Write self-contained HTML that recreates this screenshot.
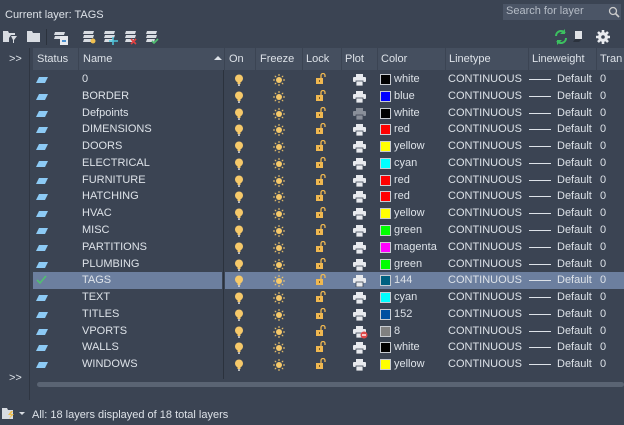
<!DOCTYPE html>
<html><head><meta charset="utf-8"><style>
*{margin:0;padding:0;box-sizing:border-box}
body{width:624px;height:425px;background:#3b4453;font-family:"Liberation Sans",sans-serif;font-size:11px;color:#dde2e8;position:relative;overflow:hidden}
.a{position:absolute;white-space:nowrap}
.hdr{position:absolute;top:48px;left:33px;width:591px;height:22px;background:#454f5f}
.sep{position:absolute;top:48px;width:1px;height:22px;background:#3b4453}
.row{position:absolute;left:33px;width:591px;height:17px}
.row span,.row svg{position:absolute}
.row span{top:2px}
.sel{background:#6c7f9f}
.sw{width:11px;height:11px;top:3px;border:1px solid #c8ccd2}
</style></head><body>
<svg width="0" height="0" style="position:absolute">
<symbol id="st" viewBox="0 0 12 6"><path d="M3 0H12L9 6H0Z" fill="#8ccaf5"/></symbol>
<symbol id="bulb" viewBox="0 0 10 12"><circle cx="5" cy="4.5" r="4" fill="#f6c96a"/><rect x="3.5" y="8" width="3" height="2" fill="#f6c96a"/><rect x="4" y="10.3" width="2" height="1.5" fill="#ddd"/></symbol>
<symbol id="sun" viewBox="0 0 12 12"><circle cx="6" cy="6" r="3" fill="#f6c96a"/><g stroke="#f6c96a" stroke-width="1"><path d="M6 0v2M6 10v2M0 6h2M10 6h2M1.8 1.8l1.4 1.4M8.8 8.8l1.4 1.4M1.8 10.2l1.4-1.4M8.8 3.2l1.4-1.4"/></g></symbol>
<symbol id="lock" viewBox="0 0 10 12"><path d="M5 5V2.5a2 2 0 0 1 4 0V4" stroke="#f0b850" stroke-width="1.3" fill="none"/><rect x="0" y="5" width="7" height="6" fill="#f0b850"/><rect x="3" y="7" width="1" height="2" fill="#7a5a20"/></symbol>
<symbol id="pr" viewBox="0 0 13 12"><rect x="3" y="0" width="7" height="3" fill="#e8eaee"/><rect x="0" y="3" width="13" height="5" rx="1" fill="#e8eaee"/><rect x="3" y="7" width="7" height="5" fill="#e8eaee" stroke="#3b4453" stroke-width=".8"/></symbol>
</svg>

<div class="a" style="left:5px;top:9px;color:#dde2e8">Current layer: TAGS</div>
<div class="a" style="left:503px;top:4px;width:118px;height:16px;background:#4b5566"></div>
<div class="a" style="left:506px;top:5px;color:#b5bcc6">Search for layer</div>
<svg class="a" style="left:608px;top:6px" width="12" height="12"><circle cx="5" cy="5" r="3.5" stroke="#ccc" stroke-width="1.3" fill="none"/><path d="M7.5 7.5L11 11" stroke="#ccc" stroke-width="1.6"/></svg>

<svg class="a" style="left:2px;top:28px" width="170" height="18">
<path d="M1 3h5l1 2h6v2H9l-2 3v4H1z" fill="#d8dce2"/><path d="M9 8h6l-3 4v3h-1v-3z" fill="#d8dce2"/>
<path d="M25 3h5l1 2h7v9H25z" fill="#d8dce2"/>
<rect x="44" y="1" width="1" height="16" fill="#2b323d"/>
<g fill="#d8dce2"><path d="M53 4h10l-1 3H52zM53 8h10l-1 3H52z"/><rect x="58" y="8" width="8" height="9" fill="#e8eaee"/><rect x="60" y="12" width="4" height="2" fill="#4a90d0"/></g>
<g fill="#d8dce2"><path d="M82 3h10l-1 3H81zM82 7h10l-1 3H81zM82 11h8l-1 3h-8z"/></g><circle cx="91" cy="13" r="2.5" fill="#f0c050"/>
<g fill="#d8dce2"><path d="M103 3h10l-1 3h-10zM103 7h10l-1 3h-10zM103 11h8l-1 3h-8z"/></g><path d="M107 13h9M111 9v8" stroke="#50c8e0" stroke-width="1.5"/>
<g fill="#d8dce2"><path d="M124 3h10l-1 3h-10zM124 7h10l-1 3h-10zM124 11h8l-1 3h-8z"/></g><path d="M129 11l5 5M134 11l-5 5" stroke="#e04040" stroke-width="1.6"/>
<g fill="#d8dce2"><path d="M145 3h10l-1 3h-10zM145 7h10l-1 3h-10zM145 11h8l-1 3h-8z"/></g><path d="M150 13l2 2 4-4" stroke="#50c070" stroke-width="1.6" fill="none"/>
</svg>
<svg class="a" style="left:553px;top:28px" width="70" height="18">
<path d="M3 8a5 5 0 0 1 9-3M13 10a5 5 0 0 1-9 3" stroke="#3cc060" stroke-width="2" fill="none"/><path d="M12 1v5H7zM4 17v-5h5z" fill="#3cc060"/>
<rect x="22" y="3" width="7" height="8" fill="#e0e2e6"/><path d="M22 11h7l-3 3h-6z" fill="#2b323d"/>
<g fill="#e8eaee"><circle cx="50" cy="9" r="5"/><g stroke="#e8eaee" stroke-width="2.6"><path d="M50 2v14M43 9h14M45 4l10 10M55 4L45 14"/></g></g><circle cx="50" cy="9" r="1.8" fill="#3b4453"/>
</svg>

<div class="a" style="left:0;top:48px;width:30px;height:352px;border-right:1px solid #2f3642;background:#3b4453"></div>
<div class="a" style="left:9px;top:53px;color:#dde2e8">&gt;&gt;</div>
<div class="a" style="left:9px;top:372px;color:#dde2e8">&gt;&gt;</div>

<div class="hdr"></div>
<div class="sep" style="left:78px"></div><div class="sep" style="left:224px"></div><div class="sep" style="left:255px"></div><div class="sep" style="left:302px"></div><div class="sep" style="left:341px"></div><div class="sep" style="left:377px"></div><div class="sep" style="left:445px"></div><div class="sep" style="left:528px"></div><div class="sep" style="left:596px"></div>
<div class="a" style="left:37px;top:53px">Status</div>
<div class="a" style="left:83px;top:53px">Name</div>
<div class="a" style="left:214px;top:56px;width:0;height:0;border-left:4px solid transparent;border-right:4px solid transparent;border-bottom:4px solid #dde2e8"></div>
<div class="a" style="left:229px;top:53px">On</div>
<div class="a" style="left:260px;top:53px">Freeze</div>
<div class="a" style="left:306px;top:53px">Lock</div>
<div class="a" style="left:345px;top:53px">Plot</div>
<div class="a" style="left:381px;top:53px">Color</div>
<div class="a" style="left:449px;top:53px">Linetype</div>
<div class="a" style="left:532px;top:53px">Lineweight</div>
<div class="a" style="left:600px;top:53px">Tran</div>

<div id="rows"></div>
<div class="a" style="left:223px;top:70px;width:1px;height:309px;background:#2b323d"></div>
<div class="a" style="left:37px;top:382px;width:587px;height:5px;border-radius:3px;background:#5a6473"></div>

<svg class="a" style="left:1px;top:406px" width="24" height="14"><path d="M1 2h5l1 2h5v9H1z" fill="#d8dce2"/><path d="M10 5l-3 4h3l-2 4 5-5h-3l2-3z" fill="#f0c050"/><path d="M18 6h6l-3 3z" fill="#d8dce2"/></svg>
<div class="a" style="left:32px;top:409px">All: 18 layers displayed of 18 total layers</div>

<script>
var d=[["0","#000","white"],["BORDER","#0000ff","blue"],["Defpoints","#000","white",1],["DIMENSIONS","#ff0000","red"],["DOORS","#ffff00","yellow"],["ELECTRICAL","#00ffff","cyan"],["FURNITURE","#ff0000","red"],["HATCHING","#ff0000","red"],["HVAC","#ffff00","yellow"],["MISC","#00ff00","green"],["PARTITIONS","#ff00ff","magenta"],["PLUMBING","#00ff00","green"],["TAGS","#006080","144",0,1],["TEXT","#00ffff","cyan"],["TITLES","#0050a0","152"],["VPORTS","#808080","8",2],["WALLS","#000","white"],["WINDOWS","#ffff00","yellow"]];
var h="";
d.forEach(function(r,i){
var t=71+i*16.78;
h+='<div class="row'+(r[4]?' sel':'')+'" style="top:'+t+'px">';
if(r[4]) h+='<div style="position:absolute;left:189px;top:0;width:3px;height:17px;background:#3b4453"></div><svg style="left:3px;top:3px" width="12" height="10"><path d="M1 5l3 3 6-7" stroke="#50c070" stroke-width="1.6" fill="none"/></svg>';
else h+='<svg style="left:3px;top:6px" width="12" height="6"><use href="#st"/></svg>';
h+='<span style="left:49px">'+r[0]+'</span>';
h+='<svg style="left:201px;top:3px" width="10" height="12"><use href="#bulb"/></svg>';
h+='<svg style="left:240px;top:3px" width="12" height="12"><use href="#sun"/></svg>';
h+='<svg style="left:283px;top:2px" width="10" height="12"><use href="#lock"/></svg>';
h+='<svg style="left:320px;top:3px" width="13" height="12" '+(r[3]==1?'opacity=".45"':'')+'><use href="#pr"/></svg>';
if(r[3]==2) h+='<svg style="left:327px;top:8px" width="8" height="8"><circle cx="4" cy="4" r="3.5" fill="#e04848"/><rect x="2" y="3.3" width="4" height="1.4" fill="#fff"/></svg>';
h+='<div class="sw" style="position:absolute;left:347px;background:'+r[1]+'"></div>';
h+='<span style="left:361px">'+r[2]+'</span>';
h+='<span style="left:415px">CONTINUOUS</span>';
h+='<div style="position:absolute;left:496px;top:8px;width:22px;height:1px;background:#dde2e8"></div>';
h+='<span style="left:524px">Default</span><span style="left:567px">0</span></div>';
});
document.getElementById("rows").innerHTML=h;
</script>
</body></html>
